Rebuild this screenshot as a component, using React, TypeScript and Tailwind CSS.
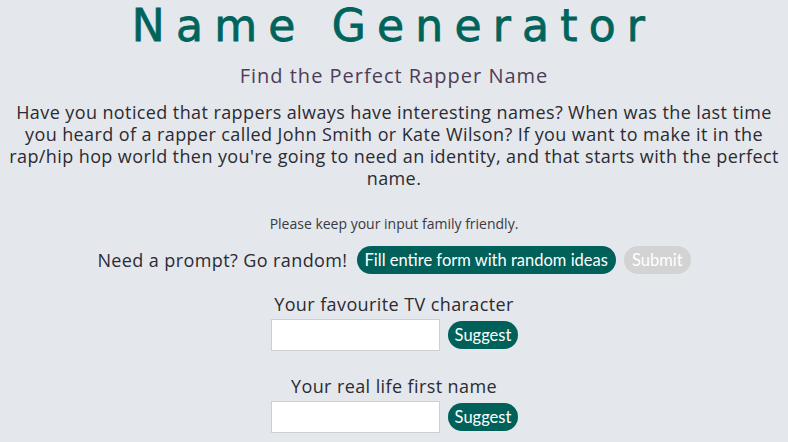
import React from "react";

const fields = ["Your favourite TV character", "Your real life first name"];

export default function App() {
  return (
    <div className="min-h-screen bg-[#e4e7eb] flex flex-col items-center text-center font-['Open_Sans',sans-serif] text-[#2b2b33]">
      <h1 className="mt-[0px] text-[44px] leading-[52px] tracking-[0.255em] text-[#00645c] [-webkit-text-stroke:0.8px_#00645c] font-['DejaVu_Sans',sans-serif]">
        Name Generator
      </h1>
      <h2 className="mt-[10px] text-[20px] leading-[28px] tracking-[0.05em] text-[#4d3d58]">
        Find the Perfect Rapper Name
      </h2>
      <p className="mt-[11px] text-[18px] leading-[22px] tracking-[0.4px] px-2">
        Have you noticed that rappers always have interesting names? When was the last time
        <br />
        you heard of a rapper called John Smith or Kate Wilson? If you want to make it in the
        <br />
        rap/hip hop world then you're going to need an identity, and that starts with the perfect
        <br />
        name.
      </p>
      <p className="mt-[26px] text-[14px] leading-[18px] text-[#3a3a44]">
        Please keep your input family friendly.
      </p>
      <div className="mt-[13px] flex items-center gap-[8px]">
        <span className="text-[18px] tracking-[0.4px] mr-[1px]">Need a prompt? Go random!</span>
        <button className="h-[28px] px-[8px] rounded-full bg-[#00605a] text-white text-[16.5px] font-['Lato',sans-serif]">
          Fill entire form with random ideas
        </button>
        <button className="h-[28px] px-[8px] rounded-full bg-[#d3d3d3] text-white text-[16.5px] font-['Lato',sans-serif]">
          Submit
        </button>
      </div>
      {fields.map((f, i) => (
        <div key={f} className={`flex flex-col items-center ${i === 0 ? "mt-[18px]" : "mt-[23px]"}`}>
          <label className="text-[18px] leading-[24px] tracking-[0.4px]">{f}</label>
          <div className="mt-[3px] flex items-center gap-[8px] pl-[1px]">
            <input className="w-[169px] h-[32px] bg-white border border-[#cfcfcf] outline-none" />
            <button className="h-[28px] px-[7px] rounded-full bg-[#00605a] text-white text-[16.5px] font-['Lato',sans-serif]">
              Suggest
            </button>
          </div>
        </div>
      ))}
    </div>
  );
}
